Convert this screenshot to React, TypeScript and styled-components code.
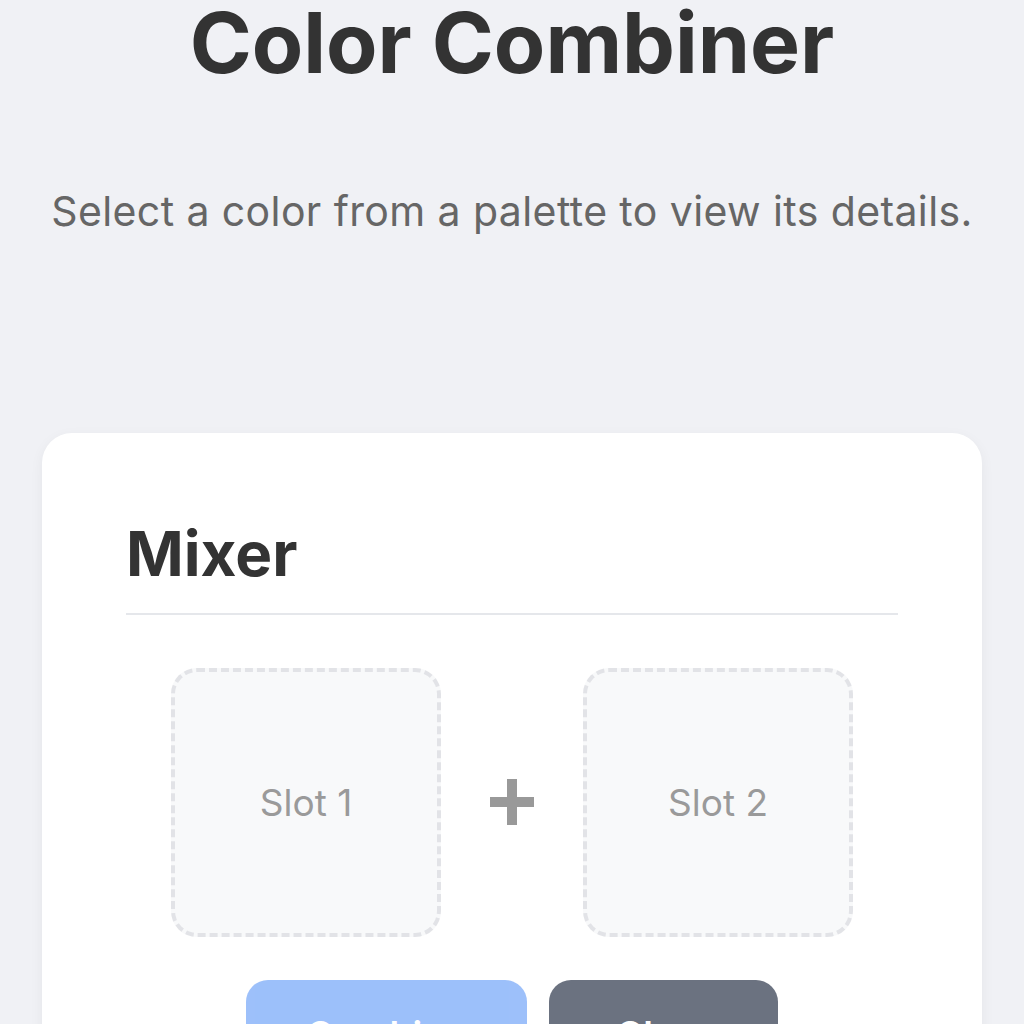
import React from 'react';
import styled, { createGlobalStyle } from 'styled-components';

const GlobalStyle = createGlobalStyle`
  html, body {
    margin: 0;
    padding: 0;
    background: #f0f1f5;
  }
  body {
    font-family: Inter, "Noto Sans", "Liberation Sans", sans-serif;
    color: #333333;
  }
  * {
    box-sizing: border-box;
  }
`;

const Page = styled.div`
  min-height: 100vh;
  padding: 0 42px 80px;
  display: flex;
  flex-direction: column;
  align-items: center;
`;

const Title = styled.h1`
  margin: 1px 0 0;
  font-size: 84px;
  line-height: 1;
  font-weight: 700;
  color: #333333;
  text-align: center;
`;

const Subtitle = styled.p`
  margin: 96px 0 0;
  font-size: 41px;
  letter-spacing: 0.4px;
  line-height: 1.5;
  color: #666666;
  text-align: center;
`;

const Card = styled.section`
  width: 100%;
  margin-top: 190px;
  background: #ffffff;
  border-radius: 30px;
  padding: 82px 84px;
  box-shadow: 0 4px 14px rgba(0, 0, 0, 0.05);
`;

const SectionTitle = styled.h2`
  margin: 0;
  font-size: 62px;
  line-height: 1.2;
  font-weight: 700;
  color: #333333;
  padding: 2px 0 22px;
  border-bottom: 2px solid #e5e7eb;
`;

const SlotRow = styled.div`
  margin-top: 53px;
  display: flex;
  justify-content: center;
  align-items: center;
  gap: 49px;
`;

const Slot = styled.div`
  width: 270px;
  height: 269px;
  border: 4px dashed #e2e3e7;
  border-radius: 26px;
  background: #f8f9fa;
  display: flex;
  align-items: center;
  justify-content: center;
  font-size: 37px;
  color: #9a9a9a;
`;

const PlusSign = styled.svg`
  width: 44px;
  height: 46px;
  flex: none;
`;

const ButtonRow = styled.div`
  margin-top: 43px;
  display: flex;
  justify-content: center;
  gap: 22px;
`;

const Button = styled.button<{ $variant: 'primary' | 'secondary'; $width: number }>`
  width: ${p => p.$width}px;
  font-family: inherit;
  font-size: 37px;
  font-weight: 600;
  color: #ffffff;
  border: none;
  border-radius: 22px;
  padding: 32px 0;
  background: ${p => (p.$variant === 'primary' ? '#3b82f6' : '#6b7280')};
  opacity: ${p => (p.$variant === 'primary' ? 0.5 : 1)};
  cursor: pointer;
`;

export default function App() {
  return (
    <>
      <GlobalStyle />
      <Page>
        <Title>Color Combiner</Title>
        <Subtitle>Select a color from a palette to view its details.</Subtitle>
        <Card>
          <SectionTitle>Mixer</SectionTitle>
          <SlotRow>
            <Slot>Slot 1</Slot>
            <PlusSign viewBox="0 0 44 46">
              <rect x="17" y="0" width="10" height="46" fill="#999999" />
              <rect x="0" y="18" width="44" height="10" fill="#999999" />
            </PlusSign>
            <Slot>Slot 2</Slot>
          </SlotRow>
          <ButtonRow>
            <Button $variant="primary" $width={281} disabled>Combine</Button>
            <Button $variant="secondary" $width={229}>Clear</Button>
          </ButtonRow>
        </Card>
      </Page>
    </>
  );
}
